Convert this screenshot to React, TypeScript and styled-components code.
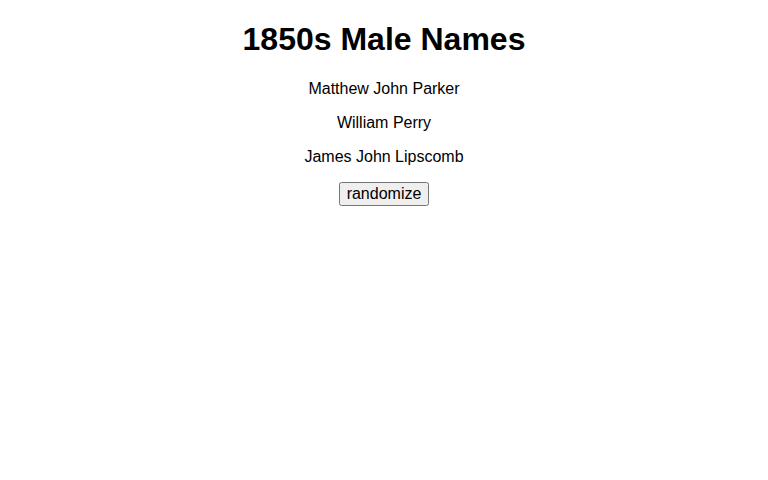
import React from "react";
import styled, { createGlobalStyle } from "styled-components";

const GlobalStyle = createGlobalStyle`
  body {
    margin: 0 8px;
    background: #fff;
    color: #000;
    font-family: "Liberation Sans", Arial, sans-serif;
    font-size: 16px;
  }
`;

const Page = styled.main`
  text-align: center;
`;

const Title = styled.h1`
  margin: 21px 0 22px;
  font-size: 32px;
  font-weight: bold;
`;

const Name = styled.p`
  margin: 16px 0;
`;

const RandomizeButton = styled.button`
  font-family: inherit;
  font-size: 16px;
`;

const firstNames = ["Matthew John", "William", "James John", "Henry", "George", "Thomas"];
const lastNames = ["Parker", "Perry", "Lipscomb", "Walker", "Turner", "Hayes"];

const pick = (list: string[]): string => list[Math.floor(Math.random() * list.length)];

export default function App() {
  const [names, setNames] = React.useState<string[]>([
    "Matthew John Parker",
    "William Perry",
    "James John Lipscomb",
  ]);

  const randomize = () =>
    setNames(names.map(() => `${pick(firstNames)} ${pick(lastNames)}`));

  return (
    <>
      <GlobalStyle />
      <Page>
        <Title>1850s Male Names</Title>
        {names.map((name, index) => (
          <Name key={index}>{name}</Name>
        ))}
        <RandomizeButton type="button" onClick={randomize}>
          randomize
        </RandomizeButton>
      </Page>
    </>
  );
}
